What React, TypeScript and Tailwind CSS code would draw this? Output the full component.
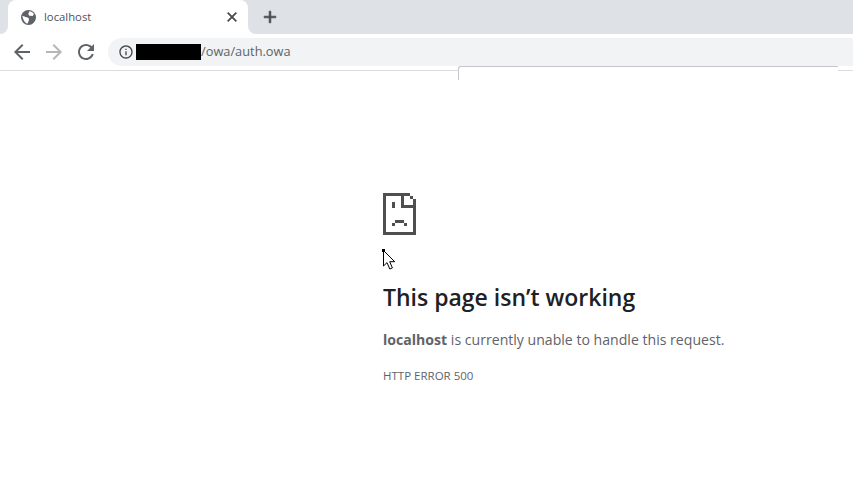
const font = { fontFamily: '"Open Sans", sans-serif' };

const Icon = ({ d, size, className, bold }: { d: string; size: number; className: string; bold?: boolean }) => (
  <svg
    width={size}
    height={size}
    viewBox="0 0 24 24"
    fill="currentColor"
    stroke={bold ? "currentColor" : "none"}
    strokeWidth={bold ? 0.8 : 0}
    className={className}
  >
    <path d={d} />
  </svg>
);

const BACK = "M20 11H7.830l5.590-5.590L12 4l-8 8 8 8 1.410-1.410L7.830 13H20v-2z";
const FORWARD = "M4 11h12.170l-5.590-5.590L12 4l8 8-8 8-1.410-1.410L16.170 13H4v-2z";
const RELOAD =
  "M17.650 6.350C16.200 4.900 14.210 4 12 4c-4.420 0-7.990 3.580-7.990 8s3.570 8 7.990 8c3.730 0 6.840-2.550 7.730-6h-2.080c-.82 2.330-3.040 4-5.650 4-3.310 0-6-2.690-6-6s2.690-6 6-6c1.660 0 3.140.69 4.220 1.780L13 11h7V4l-2.350 2.350z";
const INFO =
  "M11 7h2v2h-2zm0 4h2v6h-2zm1-9C6.480 2 2 6.480 2 12s4.480 10 10 10 10-4.480 10-10S17.520 2 12 2zm0 18c-4.410 0-8-3.590-8-8s3.590-8 8-8 8 3.590 8 8-3.590 8-8 8z";
const CLOSE =
  "M19 6.410L17.590 5 12 10.590 6.410 5 5 6.410 10.590 12 5 17.590 6.410 19 12 13.410 17.590 19 19 17.590 13.410 12z";
const ADD = "M19 13h-6v6h-2v-6H5v-2h6V5h2v6h6v2z";

const SadPage = () => (
  <svg width="33" height="42" viewBox="0 0 33 42" fill="#4f4f4f" shapeRendering="crispEdges">
    <rect x="0" y="0" width="3" height="42" />
    <rect x="0" y="0" width="27" height="3" />
    <rect x="0" y="39" width="33" height="3" />
    <rect x="30" y="6" width="3" height="36" />
    <rect x="18" y="0" width="3" height="15" />
    <rect x="18" y="12" width="15" height="3" />
    <rect x="27" y="3" width="3" height="3" />
    <rect x="9" y="9" width="3" height="6" />
    <rect x="12" y="27" width="9" height="3" />
    <rect x="9" y="30" width="3" height="3" />
    <rect x="21" y="30" width="3" height="3" />
  </svg>
);

const Globe = () => (
  <svg width="15" height="15" viewBox="0 0 16 16">
    <circle cx="8" cy="8" r="8" fill="#5f6368" />
    <path d="M9 1.200c2 .2 3.800 1.300 4.800 3l-1.300 2.300-3.500-.3-1.300-2zM1.500 6l3.500 1.500 3.200 1 .3 2.500-1.500 3.500C4.500 14 1.800 10 1.500 6z" fill="#fff" />
  </svg>
);

const Cursor = () => (
  <svg width="14" height="20" viewBox="0 0 14 20" className="absolute left-[383px] top-[250px] overflow-visible">
    <rect x="-1" y="-1" width="3" height="3" fill="#000" />
    <path d="M.5.5V16l3.500-3.400L6.800 19l2.600-1.100-2.700-6.200h5z" fill="#fff" stroke="#000" strokeWidth="1" />
  </svg>
);

export default function App() {
  return (
    <div className="relative h-[501px] w-[853px] overflow-hidden bg-white" style={font}>
      <div className="flex h-[34px] items-end bg-[#dee1e6] pl-2">
        <div className="relative flex h-[34px] w-[240px] items-center rounded-t-lg bg-white pl-[13px] pr-[8px]">
          <div className="absolute bottom-0 left-[-8px] h-2 w-2 bg-white">
            <div className="h-2 w-2 rounded-br-lg bg-[#dee1e6]" />
          </div>
          <div className="absolute bottom-0 right-[-8px] h-2 w-2 bg-white">
            <div className="h-2 w-2 rounded-bl-lg bg-[#dee1e6]" />
          </div>
          <Globe />
          <span className="ml-2 flex-1 text-[11.300px] text-[#4f5357]">localhost</span>
          <Icon d={CLOSE} size={16} bold className="text-[#45494d]" />
        </div>
        <Icon d={ADD} size={20} bold className="mb-[7px] ml-3 text-[#45494d]" />
      </div>
      <div className="flex h-[37px] items-center border-b border-[#dadce0] pl-[10px]">
        <Icon d={BACK} size={24} className="text-[#5f6368]" />
        <Icon d={FORWARD} size={24} className="ml-2 text-[#b4b6b8]" />
        <Icon d={RELOAD} size={24} className="ml-2 text-[#5f6368]" />
        <div className="ml-[10px] flex h-[28px] flex-1 items-center rounded-l-full bg-[#f1f3f4] pl-[10px] text-[12.800px] text-[#5f6368]">
          <Icon d={INFO} size={16} className="text-[#45494d]" />
          <span className="ml-[2px] h-[16px] w-[65px] bg-black" />
          <span>/owa/auth.owa</span>
        </div>
      </div>
      <main className="pl-[383px] pt-[122px]">
        <SadPage />
        <h1 className="mt-[46px] text-[23px] font-semibold leading-[32px] text-[#202124]">This page isn’t working</h1>
        <p className="mt-[16px] text-[14.100px] leading-[22px] text-[#5f6368]">
          <b className="font-bold">localhost</b> is currently unable to handle this request.
        </p>
        <p className="mt-[17px] text-[11.500px] leading-[16px] text-[#5f6368]">HTTP ERROR 500</p>
      </main>
      <Cursor />
      <div className="absolute left-[458px] top-[66px] h-[14px] w-[380px] rounded-tl-[3px] border-l border-t border-[#c4c6ca] bg-white" />
    </div>
  );
}
